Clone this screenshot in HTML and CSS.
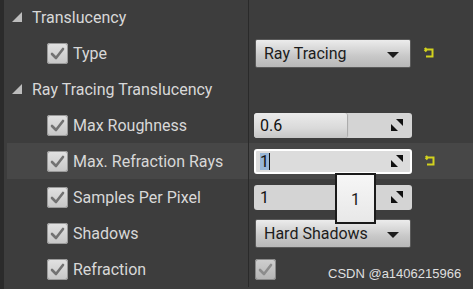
FILE: index.html
```html
<!DOCTYPE html>
<html lang="en">
<head>
    <meta charset="UTF-8">
    <title>Details - Translucency</title>
    <link rel="stylesheet" href="styles.css">
</head>
<body>
    <div class="details">
        <!-- Translucency -->
        <div class="row category first">
            <div class="name"><span class="arrow"></span>Translucency</div>
            <div class="value"></div>
        </div>
        <div class="row">
            <div class="name">
                <span class="check"><svg viewBox="0 0 21 21"><path d="M5 11 L9 15 L16 6"/></svg></span>Type
            </div>
            <div class="value">
                <div class="combo">Ray Tracing<span class="combo-arrow"></span></div>
                <svg class="reset" viewBox="0 0 12 12"><path d="M1.5 2.5 L3.5 1 M1.5 2.5 L3.5 4.5 M1.5 2.5 L9.5 2.5 L9.5 9.5 L3 9.5"/></svg>
            </div>
        </div>

        <!-- Ray Tracing Translucency -->
        <div class="row category">
            <div class="name"><span class="arrow"></span>Ray Tracing Translucency</div>
            <div class="value"></div>
        </div>
        <div class="row">
            <div class="name">
                <span class="check"><svg viewBox="0 0 21 21"><path d="M5 11 L9 15 L16 6"/></svg></span>Max Roughness
            </div>
            <div class="value">
                <div class="num">
                    <div class="fill" style="width: 93px"></div>
                    <span class="num-text">0.6</span>
                    <svg class="spin" viewBox="0 0 12 12"><polygon points="5,0 12,0 12,7"/><polygon points="0,5 7,12 0,12"/></svg>
                </div>
            </div>
        </div>
        <div class="row hover">
            <div class="name">
                <span class="check"><svg viewBox="0 0 21 21"><path d="M5 11 L9 15 L16 6"/></svg></span>Max. Refraction Rays
            </div>
            <div class="value">
                <div class="num focused">
                    <span class="num-text"><span class="selected">1</span><span class="caret"></span></span>
                    <svg class="spin" viewBox="0 0 12 12"><polygon points="5,0 12,0 12,7"/><polygon points="0,5 7,12 0,12"/></svg>
                </div>
                <svg class="reset" viewBox="0 0 12 12"><path d="M1.5 2.5 L3.5 1 M1.5 2.5 L3.5 4.5 M1.5 2.5 L9.5 2.5 L9.5 9.5 L3 9.5"/></svg>
            </div>
        </div>
        <div class="row">
            <div class="name">
                <span class="check"><svg viewBox="0 0 21 21"><path d="M5 11 L9 15 L16 6"/></svg></span>Samples Per Pixel
            </div>
            <div class="value">
                <div class="num">
                    <span class="num-text">1</span>
                    <svg class="spin" viewBox="0 0 12 12"><polygon points="5,0 12,0 12,7"/><polygon points="0,5 7,12 0,12"/></svg>
                </div>
            </div>
        </div>
        <div class="row">
            <div class="name">
                <span class="check"><svg viewBox="0 0 21 21"><path d="M5 11 L9 15 L16 6"/></svg></span>Shadows
            </div>
            <div class="value">
                <div class="combo">Hard Shadows<span class="combo-arrow"></span></div>
            </div>
        </div>
        <div class="row">
            <div class="name">
                <span class="check"><svg viewBox="0 0 21 21"><path d="M5 11 L9 15 L16 6"/></svg></span>Refraction
            </div>
            <div class="value">
                <span class="check dim"><svg viewBox="0 0 21 21"><path d="M5 11 L9 15 L16 6"/></svg></span>
            </div>
        </div>
    </div>

    <div class="tooltip">1</div>
    <div class="watermark">CSDN @a1406215966</div>
</body>
</html>
```

FILE: styles.css
```css
body {
    margin: 0;
    padding: 0;
    background-color: #3d3d3d;
    font-family: Roboto, "Noto Sans", sans-serif;
    font-size: 16px;
    color: #d8d8d8;
    overflow: hidden;
}
.details {
    position: relative;
    min-height: 289px;
    border-left: 4px solid #2b2b2b;
    padding-left: 3px;
    box-sizing: border-box;
}
.row {
    display: flex;
    height: 36px;
}
.row.first {
    height: 35px;
}
.row.hover {
    background-color: #474747;
}
.name {
    width: 241px;
    display: flex;
    align-items: center;
    padding-left: 40px;
    box-sizing: border-box;
}
.category .name {
    padding-left: 5px;
}
.value {
    flex: 1;
    display: flex;
    align-items: center;
    border-left: 1px solid #2a2a2a;
    padding-left: 5px;
}
.arrow {
    width: 0;
    height: 0;
    border-left: 10px solid transparent;
    border-bottom: 10px solid #bdbdbd;
    margin-right: 10px;
    margin-top: -1px;
}
.check {
    width: 21px;
    height: 21px;
    border-radius: 3px;
    background: linear-gradient(#e2e2e2, #c6c6c6);
    box-shadow: inset 0 0 0 1px #9a9a9a;
    margin-right: 5px;
    display: flex;
}
.check svg {
    width: 21px;
    height: 21px;
}
.check path {
    fill: none;
    stroke: #727272;
    stroke-width: 2.6;
    stroke-linecap: round;
    stroke-linejoin: round;
}
.check.dim {
    background: linear-gradient(#cfcfcf, #b4b4b4);
    box-shadow: inset 0 0 0 1px #8a8a8a;
    margin-left: 1px;
}
.check.dim path {
    stroke: #8c8c8c;
}
.combo {
    width: 156px;
    height: 29px;
    box-sizing: border-box;
    margin-left: 1px;
    border: 1px solid #5a5a5a;
    border-radius: 2px;
    background: linear-gradient(#ececec, #c8c8c8 60%, #b8b8b8);
    color: #1c1c1c;
    display: flex;
    align-items: center;
    padding-left: 8px;
    position: relative;
}
.combo-arrow {
    position: absolute;
    right: 11px;
    top: 12px;
    width: 0;
    height: 0;
    border-left: 6px solid transparent;
    border-right: 6px solid transparent;
    border-top: 6px solid #1c1c1c;
}
.reset {
    width: 12px;
    height: 12px;
    margin-left: 12px;
}
.reset path {
    fill: none;
    stroke: #d2d21e;
    stroke-width: 2;
}
.num {
    width: 158px;
    height: 25px;
    box-sizing: border-box;
    border-radius: 3px;
    background-color: #d4d4d4;
    color: #111111;
    position: relative;
    display: flex;
    align-items: center;
    overflow: hidden;
}
.num .fill {
    position: absolute;
    left: 0;
    top: 0;
    bottom: 0;
    border-radius: 3px;
    background: linear-gradient(#ebebeb, #dadada 60%, #c6c6c6);
    box-shadow: 1px 0 1px #a8a8a8;
}
.num-text {
    position: relative;
    padding-left: 6px;
    display: flex;
    align-items: center;
}
.num.focused {
    border: 2px solid #ffffff;
    height: 25px;
    background-color: #dcdcdc;
}
.num.focused .num-text {
    padding-left: 4px;
}
.selected {
    background-color: #98b6d6;
    line-height: 17px;
}
.caret {
    width: 1px;
    height: 17px;
    background-color: #111111;
}
.spin {
    position: absolute;
    right: 9px;
    top: 6px;
    width: 12px;
    height: 12px;
    fill: #111111;
}
.num.focused .spin {
    right: 7px;
    top: 4px;
}
.tooltip {
    position: absolute;
    left: 335px;
    top: 173px;
    width: 41px;
    height: 51px;
    box-sizing: border-box;
    border: 2px solid #1a1a1a;
    background: linear-gradient(#f6f6f6, #e8e8e8);
    color: #1a1a1a;
    display: flex;
    justify-content: center;
    align-items: center;
    padding-top: 2px;
}
.watermark {
    position: absolute;
    left: 328px;
    top: 266px;
    font-family: "Liberation Sans", Arial, sans-serif;
    font-size: 13px;
    color: rgba(255, 255, 255, 0.85);
}
```
